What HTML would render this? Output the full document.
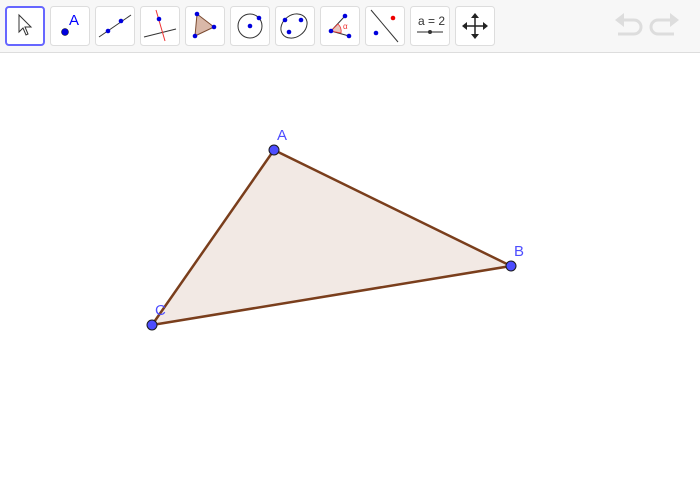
<!DOCTYPE html>
<html><head><meta charset="utf-8"><style>
html,body{margin:0;padding:0;width:700px;height:500px;overflow:hidden;background:#fff;font-family:"Liberation Sans",sans-serif}
</style></head><body>
<svg width="700" height="500" xmlns="http://www.w3.org/2000/svg" font-family="Liberation Sans, sans-serif">
<rect x="0" y="0" width="700" height="52" fill="#f7f7f7"/>
<line x1="0" y1="52.5" x2="700" y2="52.5" stroke="#ddd"/>
<g fill="#fff" stroke="#ddd">
<rect x="50.5" y="6.5" width="39" height="39" rx="3"/>
<rect x="95.5" y="6.5" width="39" height="39" rx="3"/>
<rect x="140.5" y="6.5" width="39" height="39" rx="3"/>
<rect x="185.5" y="6.5" width="39" height="39" rx="3"/>
<rect x="230.5" y="6.5" width="39" height="39" rx="3"/>
<rect x="275.5" y="6.5" width="39" height="39" rx="3"/>
<rect x="320.5" y="6.5" width="39" height="39" rx="3"/>
<rect x="365.5" y="6.5" width="39" height="39" rx="3"/>
<rect x="410.5" y="6.5" width="39" height="39" rx="3"/>
<rect x="455.5" y="6.5" width="39" height="39" rx="3"/>
</g>
<rect x="6" y="7" width="38" height="38" rx="3" fill="#fff" stroke="#6666ff" stroke-width="2"/>
<path d="M19,15 L19,32 L23,28 L26,35 L28,34 L25,27 L31,27 Z" fill="#fff" stroke="#333" stroke-width="1"/>
<circle cx="65" cy="32" r="3.5" fill="#0000dd" stroke="#000" stroke-width=".5"/>
<text x="69" y="25" font-size="15" fill="#0000ff">A</text>
<line x1="99" y1="37" x2="131" y2="15" stroke="#333"/>
<circle cx="108" cy="31" r="2.3" fill="#00d"/><circle cx="121" cy="21" r="2.3" fill="#00d"/>
<line x1="144" y1="37" x2="176" y2="29" stroke="#333"/>
<line x1="156" y1="10" x2="165" y2="41" stroke="#e33"/>
<circle cx="159" cy="19" r="2.3" fill="#00d"/>
<path d="M197,14 L214,27 L195,36 Z" fill="#d9b8a8" stroke="#7a4a30"/>
<circle cx="197" cy="14" r="2.3" fill="#00d"/><circle cx="214" cy="27" r="2.3" fill="#00d"/><circle cx="195" cy="36" r="2.3" fill="#00d"/>
<circle cx="250" cy="26" r="12" fill="none" stroke="#333"/>
<circle cx="250" cy="26" r="2.3" fill="#00d"/><circle cx="259" cy="18" r="2.3" fill="#00d"/>
<ellipse cx="294" cy="26" rx="14" ry="11" transform="rotate(-35 294 26)" fill="none" stroke="#333"/>
<circle cx="285" cy="20" r="2.3" fill="#00d"/><circle cx="301" cy="20" r="2.3" fill="#00d"/><circle cx="289" cy="32" r="2.3" fill="#00d"/>
<path d="M331,31 L345,16 M331,31 L349,36" stroke="#333" fill="none"/>
<path d="M331,31 L338,24 A10,10 0 0 1 341,33 Z" fill="#e8c8c0" stroke="#e33" stroke-width=".8"/>
<text x="343" y="29" font-size="8" fill="#e33">α</text>
<circle cx="331" cy="31" r="2.3" fill="#00d"/><circle cx="345" cy="16" r="2.3" fill="#00d"/><circle cx="349" cy="36" r="2.3" fill="#00d"/>
<line x1="371" y1="10" x2="398" y2="42" stroke="#333"/>
<circle cx="393" cy="18" r="2.3" fill="#e00"/><circle cx="376" cy="33" r="2.3" fill="#00d"/>
<text x="418" y="25" font-size="12" fill="#333">a = 2</text>
<line x1="417" y1="32" x2="443" y2="32" stroke="#555" stroke-width="1.3"/>
<circle cx="430" cy="32" r="2" fill="#333"/>
<g stroke="#222" stroke-width="1.5"><line x1="475" y1="15" x2="475" y2="37"/><line x1="464" y1="26" x2="486" y2="26"/></g>
<g fill="#222"><path d="M475,13 L471,18 L479,18Z"/><path d="M475,39 L471,34 L479,34Z"/><path d="M462,26 L467,22 L467,30Z"/><path d="M488,26 L483,22 L483,30Z"/></g>
<g stroke="#ddd" stroke-width="3" fill="none"><path d="M622,20 L634,20 A7,7 0 0 1 634,34 L618,34"/><path d="M670,20 L658,20 A7,7 0 0 0 658,34 L674,34"/></g>
<path d="M615,20 L624,13 L624,27Z" fill="#ddd"/><path d="M679,20 L670,13 L670,27Z" fill="#ddd"/>
<path d="M274,150 L511,266 L152,325 Z" fill="#f2e9e4" stroke="#7a3e1c" stroke-width="2.5" stroke-linejoin="round"/>
<g fill="#4d4dff" stroke="#1a1a1a" stroke-width="1"><circle cx="274" cy="150" r="5"/><circle cx="511" cy="266" r="5"/><circle cx="152" cy="325" r="5"/></g>
<g fill="#4d4dff" font-size="15"><text x="277" y="140">A</text><text x="514" y="256">B</text><text x="155" y="315">C</text></g>
</svg>
</body></html>
